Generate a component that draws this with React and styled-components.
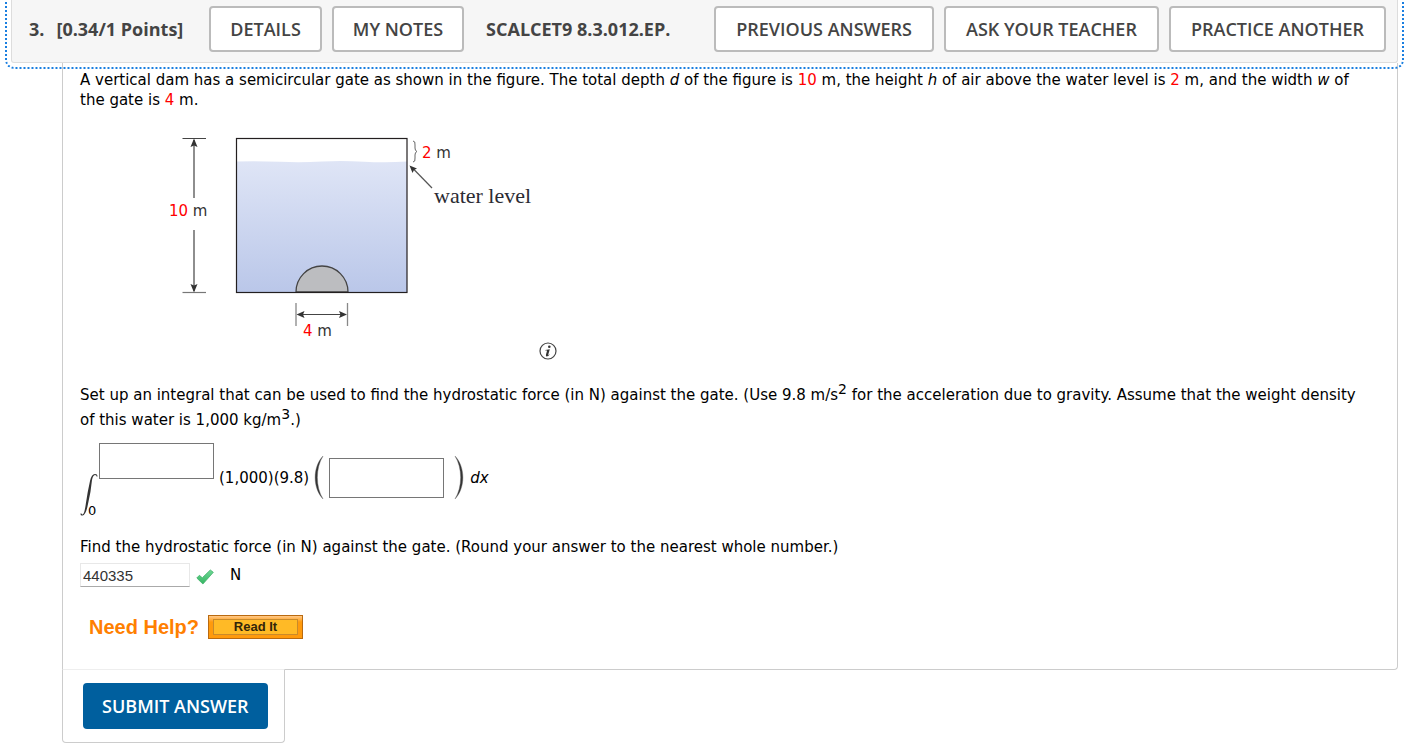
import React from "react";
import styled, { createGlobalStyle } from "styled-components";

export default function App() {
  return (
    <Page>
      <GlobalStyle />
      <Header>
        <HeaderGroup>
          <Number>3.</Number>
          <Points>[0.34/1 Points]</Points>
          <HeaderButton type="button">DETAILS</HeaderButton>
          <HeaderButton type="button">MY NOTES</HeaderButton>
          <Code>SCALCET9 8.3.012.EP.</Code>
        </HeaderGroup>
        <HeaderGroup>
          <HeaderButton type="button" $wide>PREVIOUS ANSWERS</HeaderButton>
          <HeaderButton type="button" $wide>ASK YOUR TEACHER</HeaderButton>
          <HeaderButton type="button" $wide>PRACTICE ANOTHER</HeaderButton>
        </HeaderGroup>
      </Header>

      <Content>
        <Question>
          <Text>
            A vertical dam has a semicircular gate as shown in the figure. The total depth <i>d</i> of
            the figure is <Value>10</Value> m, the height <i>h</i> of air above the water level
            is <Value>2</Value> m, and the width <i>w</i> of the gate is <Value>4</Value> m.
          </Text>

          <Figure>
            <DamDrawing />
            <InfoButton type="button" aria-label="Figure description">
              <InfoIcon />
            </InfoButton>
          </Figure>

          <Text $tall>
            Set up an integral that can be used to find the hydrostatic force (in N) against the gate.
            (Use 9.8 m/s<sup>2</sup> for the acceleration due to gravity. Assume that the weight
            density of this water is 1,000 kg/m<sup>3</sup>.)
          </Text>

          <Formula>
            <IntegralSign />
            <UpperLimit aria-label="Upper limit of the integral" />
            <Integrand>
              <Factor>(1,000)(9.8)</Factor>
              <Paren d="M9 1 C-1.500 12 -1.500 33 9 44 C1.500 32 1.500 13 9 1 Z" />
              <ExpressionInput aria-label="Integrand" />
              <Paren d="M1 1 C11.500 12 11.500 33 1 44 C8.500 32 8.500 13 1 1 Z" />
              <Differential>dx</Differential>
            </Integrand>
          </Formula>

          <Text as="label" htmlFor="force">
            Find the hydrostatic force (in N) against the gate. (Round your answer to the nearest
            whole number.)
          </Text>
          <AnswerRow>
            <AnswerInput id="force" defaultValue="440335" />
            <CheckMark />
            <span>N</span>
          </AnswerRow>

          <HelpRow>
            <HelpLabel>Need Help?</HelpLabel>
            <ReadButton type="button">Read It</ReadButton>
          </HelpRow>
        </Question>

        <SubmitBox>
          <SubmitButton type="button">SUBMIT ANSWER</SubmitButton>
        </SubmitBox>
      </Content>
    </Page>
  );
}

function DamDrawing() {
  return (
    <Drawing width="455" height="240" viewBox="80 120 455 240" role="img" aria-label="Dam with a semicircular gate">
      <defs>
        <linearGradient id="water" x1="0" y1="0" x2="0" y2="1">
          <stop offset="0" stopColor="#dfe5f6" />
          <stop offset="1" stopColor="#bac7e9" />
        </linearGradient>
      </defs>

      {/* tank, water and gate */}
      <path d="M237 161.500 Q258 161 280 161.800 T322 161.500 T364 161.700 T407 161.500 V292 H237 Z" fill="url(#water)" />
      <path d="M296 292 A26 26 0 0 1 348 292 Z" fill="#bcbdc0" stroke="#444" strokeWidth="1.300" />
      <rect x="236.500" y="138.500" width="170.500" height="154" fill="none" stroke="#231f20" strokeWidth="1.200" />

      {/* depth */}
      <g stroke="#444" strokeWidth="1.200">
        <path d="M182.500 138.500 H206 M194 140 V198 M194 230 V291" fill="none" />
        <path d="M182.500 292.500 H206" stroke="#777" />
      </g>
      <path d="M194 138.500 L197.500 147 L194 145.500 L190.500 147 Z M194 292.500 L197.500 284 L194 285.500 L190.500 284 Z" fill="#333" />

      {/* gate width */}
      <path d="M296 303 V326 M347.500 303 V326" stroke="#888" strokeWidth="1.300" />
      <path d="M298 314.500 H346" stroke="#444" />
      <path d="M296.500 314.500 L304.500 311 L303 314.500 L304.500 318 Z M347 314.500 L339 311 L340.500 314.500 L339 318 Z" fill="#333" />

      {/* air height and water level pointer */}
      <path d="M413 141 Q415.500 141 415 145 V148 Q415 151 417 151.500 Q415 152 415 155 V158 Q415.500 162 413 162" fill="none" stroke="#666" />
      <path d="M432 188 L413 168.500" stroke="#555" strokeWidth="1.200" />
      <path d="M409.500 165.500 L417 168.500 L414 170 L412.500 173 Z" fill="#333" />

      <g fontFamily='"DejaVu Sans", Verdana, sans-serif' fontSize="15" fill="#333">
        <text x="169" y="216"><tspan fill="#f00">10</tspan> m</text>
        <text x="422" y="158"><tspan fill="#f00">2</tspan> m</text>
        <text x="303" y="336"><tspan fill="#f00">4</tspan> m</text>
      </g>
      <text x="434" y="203" fontFamily='"Liberation Serif", serif' fontSize="22" fill="#2b2b33">water level</text>
    </Drawing>
  );
}

function InfoIcon() {
  return (
    <svg width="18" height="18" viewBox="0 0 18 18">
      <circle cx="9" cy="9" r="8" fill="#fff" stroke="#444" strokeWidth="1.200" />
      <circle cx="10.300" cy="4.800" r="1.300" fill="#333" />
      <path d="M6.400 8 L10.800 7.200 L9.200 12.800 Q9.100 13.400 11 12 Q9.300 14.800 7.500 14.400 Q6.600 14 7 12.600 L8.100 8.600 L6.400 8.500 Z" fill="#333" />
    </svg>
  );
}

function IntegralSign() {
  return (
    <svg width="19" height="44" viewBox="0 0 19 44" role="img" aria-label="Integral from 0">
      <path
        d="M17 4 Q16.500 2 15 2 Q12.800 2.500 12 7 Q11 18 8 31 Q6 42 2.500 42.500 Q.500 42.800 .500 41 L1 40 Q1.600 41.700 2.800 41.400 Q4.500 40.500 5.800 31 Q7.500 19 10 8 Q11.500 1 15 1 Q17.500 1 17.500 3 Z"
        fill="#333"
      />
      <text x="8" y="42" fontFamily='"DejaVu Sans", Verdana, sans-serif' fontSize="13">0</text>
    </svg>
  );
}

function Paren({ d }) {
  return (
    <svg width="10" height="45" viewBox="0 0 10 45" aria-hidden="true">
      <path d={d} fill="#333" stroke="#666" strokeWidth=".4" />
    </svg>
  );
}

function CheckMark() {
  return (
    <svg width="18" height="16" viewBox="0 0 18 16" role="img" aria-label="Correct">
      <defs>
        <linearGradient id="tick" x1="0" y1="0" x2="0" y2="1">
          <stop offset="0" stopColor="#6fd896" />
          <stop offset="1" stopColor="#35b562" />
        </linearGradient>
      </defs>
      <path d="M.800 9 L3.400 6.300 L6.300 8.800 L14.300 1 L17.300 3.300 L6.900 15 Z" fill="url(#tick)" stroke="#3fb068" strokeWidth=".8" strokeLinejoin="round" />
    </svg>
  );
}

const GlobalStyle = createGlobalStyle`
  * {
    box-sizing: border-box;
  }

  body {
    margin: 0;
    background: #fff;
    color: #000;
    font-family: "DejaVu Sans", Verdana, sans-serif;
    font-size: 15px;
    line-height: 20px;
  }

  svg {
    display: block;
    flex-shrink: 0;
  }
`;

const Page = styled.main`
  padding: 0 13px 0 11px;
`;

const Header = styled.header`
  display: flex;
  justify-content: space-between;
  align-items: center;
  padding: 6px 11px 10px 17px;
  background: #f6f6f6;
  border: 1px solid #ddd;
  border-top: 0;
  border-radius: 0 0 3px 3px;
  outline: 2px dotted #1a7fe0; /* keyboard focus ring */
  outline-offset: 4px;
  color: #444;
  font-family: "Open Sans", sans-serif;
  font-size: 18px;
  line-height: 24px;
`;

const HeaderGroup = styled.div`
  display: flex;
  align-items: center;
  gap: 10px;
  white-space: nowrap;
`;

const Number = styled.strong`
  font-weight: 700;
`;

const Points = styled.strong`
  margin: 0 16px 0 2px;
  font-weight: 700;
`;

const Code = styled.strong`
  margin-left: 12px;
  font-weight: 700;
`;

const HeaderButton = styled.button`
  height: 46px;
  padding: 0 ${({ $wide }) => ($wide ? "20px" : "19px")};
  background: #fff;
  border: 2px solid #bbb;
  border-radius: 4px;
  color: #444;
  font: inherit;
  font-weight: 600;
  cursor: pointer;
`;

const Content = styled.div`
  margin-left: 51px;
`;

const Question = styled.section`
  padding: 7px 32px 30px 17px;
  border: 1px solid #ccc;
  border-top: 0;
  border-radius: 0 0 4px 0;
`;

const Text = styled.p`
  display: block;
  margin: 0;
  line-height: ${({ $tall }) => ($tall ? "25px" : "20px")};

  sup {
    font-size: 14px;
    line-height: 0;
  }
`;

const Value = styled.span`
  color: #f00;
`;

const Figure = styled.div`
  display: flex;
  align-items: flex-end;
  gap: 4px;
  margin: 10px 0 23px;
`;

const Drawing = styled.svg`
  overflow: visible;
`;

const InfoButton = styled.button`
  padding: 0;
  background: none;
  border: 0;
  cursor: pointer;
`;

const Formula = styled.div`
  display: flex;
  align-items: flex-end;
  margin: 10px 0 20px;
`;

const UpperLimit = styled.input`
  width: 115px;
  height: 36px;
  align-self: flex-start;
  border: 1px solid #767676;
  font: inherit;
`;

const Integrand = styled.div`
  display: flex;
  align-items: center;
  padding: 12px 0 17px 5px;
`;

const Factor = styled.span`
  margin-right: 5px;
`;

const ExpressionInput = styled.input`
  width: 115px;
  height: 40px;
  margin: 0 10px 0 5px;
  border: 1px solid #767676;
  font: inherit;
`;

const Differential = styled.i`
  margin-left: 6px;
`;

const AnswerRow = styled.div`
  display: flex;
  align-items: center;
  margin-top: 6px;

  svg {
    margin: 4px 16px 0 6px;
  }
`;

const AnswerInput = styled.input`
  width: 110px;
  height: 24px;
  padding: 0 2px;
  border: 1px solid #e8e8e8;
  border-bottom-color: #aaa;
  color: #333;
  font-family: "Liberation Sans", Arial, sans-serif;
  font-size: 15px;
`;

const HelpRow = styled.div`
  display: flex;
  align-items: center;
  gap: 9px;
  margin: 28px 0 0 9px;
  font-family: "Liberation Sans", Arial, sans-serif;
`;

const HelpLabel = styled.strong`
  color: #ff8000;
  font-size: 20px;
  line-height: 24px;
`;

const ReadButton = styled.button`
  width: 95px;
  height: 24px;
  padding: 0;
  /* plate, its edge, then the orange frame */
  background-image: linear-gradient(#ffba26, #ffba26), linear-gradient(#c98a2a, #c98a2a),
    linear-gradient(#ffc98a, #ff9a0c 6px);
  background-size: 83px 14px, 85px 16px, auto;
  background-position: center;
  background-repeat: no-repeat;
  border: 1px solid #b96a10;
  color: #33260a;
  font: inherit;
  font-size: 13px;
  font-weight: 700;
  cursor: pointer;
`;

const SubmitBox = styled.div`
  width: fit-content;
  margin-top: -1px;
  padding: 13px 16px 13px 20px;
  background: #fff;
  border: 1px solid #ccc;
  border-top-color: #eee;
  border-radius: 0 0 4px 4px;
`;

const SubmitButton = styled.button`
  display: block;
  height: 46px;
  padding: 0 19px;
  background: #005f9e;
  border: 0;
  border-radius: 4px;
  color: #fff;
  font-family: "Open Sans", sans-serif;
  font-size: 18px;
  font-weight: 600;
  cursor: pointer;
`;
